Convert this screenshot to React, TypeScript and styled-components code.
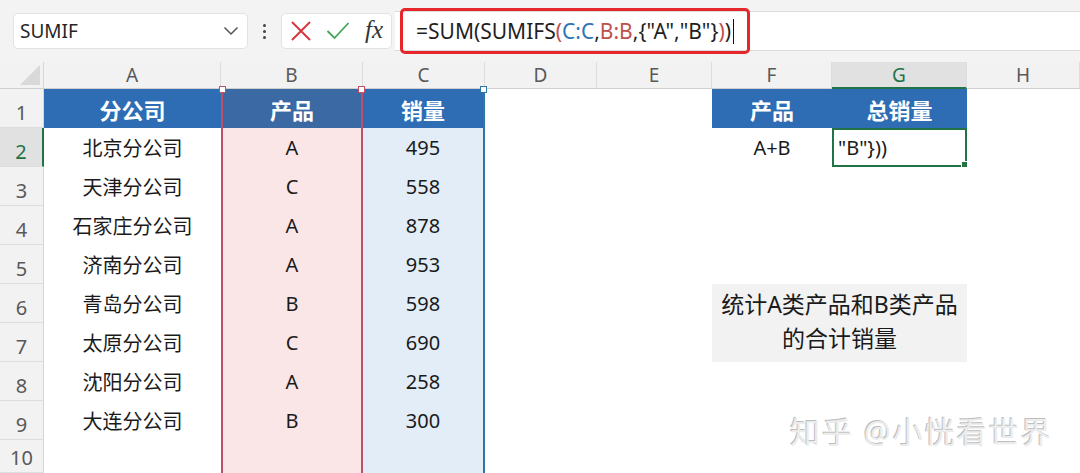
import React from 'react';
import styled, { createGlobalStyle, css } from 'styled-components';

const GlobalStyle = createGlobalStyle`
	html, body {
		margin: 0;
		padding: 0;
		background: #ffffff;
		overflow: hidden;
	}
	body {
		font-family: 'Noto Sans', 'Noto Sans CJK SC', sans-serif;
	}
`;

const COLS = '44px 177px 142px 122px 112px 115px 120px 135px 113px';

const Page = styled.div`
	position: relative;
	width: 1080px;
	height: 473px;
	overflow: hidden;
	background: #ffffff;
`;

const Toolbar = styled.div`
	height: 62px;
	display: flex;
	align-items: center;
	background: #f3f3f3;
	padding-left: 13px;
	box-sizing: border-box;
`;

const NameBox = styled.div`
	width: 235px;
	height: 36px;
	box-sizing: border-box;
	background: #ffffff;
	border: 1px solid #e2e2e2;
	border-radius: 5px;
	display: flex;
	align-items: center;
	justify-content: space-between;
	padding: 0 8px 0 6px;
	font-size: 19px;
	color: #262626;
`;

const Dots = styled.div`
	width: 33px;
	display: flex;
	flex-direction: column;
	align-items: center;
	gap: 3px;
	span {
		width: 3px;
		height: 3px;
		border-radius: 50%;
		background: #444;
	}
`;

const FxBox = styled.div`
	width: 111px;
	height: 36px;
	box-sizing: border-box;
	background: #ffffff;
	border: 1px solid #e2e2e2;
	border-radius: 5px;
	display: flex;
	align-items: center;
	justify-content: space-between;
	padding: 0 8px 0 8px;
`;

const Fx = styled.span`
	font-family: 'Liberation Serif', 'DejaVu Serif', serif;
	font-style: italic;
	font-size: 25px;
	color: #333;
	line-height: 1;
	margin-top: -4px;
`;

const FormulaArea = styled.div`
	flex: 1;
	margin-left: 3px;
	height: 40px;
	background: #ffffff;
	border-top: 1px solid #dcdcdc;
	border-bottom: 1px solid #dcdcdc;
	display: flex;
	align-items: center;
	padding-left: 5px;
	box-sizing: border-box;
`;

const Highlight = styled.div`
	width: 350px;
	height: 46px;
	flex-shrink: 0;
	box-sizing: border-box;
	border: 3px solid #e5262a;
	border-radius: 5px;
	display: flex;
	align-items: center;
	padding-left: 13px;
	font-size: 21px;
	color: #1f1f1f;
	white-space: nowrap;
`;

const Tok = styled.span<{ $c?: 'red' | 'blue' }>`
	color: ${(p) => (p.$c === 'red' ? '#c0504d' : p.$c === 'blue' ? '#2e75b6' : '#1f1f1f')};
`;

const Caret = styled.span`
	display: inline-block;
	width: 1px;
	height: 25px;
	background: #111;
	margin-left: 2px;
`;

const Sheet = styled.div`
	display: grid;
	grid-template-columns: ${COLS};
	grid-template-rows: 27px repeat(9, 39px) 33px;
`;

const Corner = styled.div`
	background: #f2f2f2;
	border-bottom: 1px solid #cfcfcf;
	border-right: 1px solid #d6d6d6;
	position: relative;
	&::after {
		content: '';
		position: absolute;
		right: 3px;
		bottom: 3px;
		width: 20px;
		height: 20px;
		background: #d9d9d9;
		clip-path: polygon(100% 0, 100% 100%, 0 100%);
	}
`;

const ColHead = styled.div<{ $active?: boolean }>`
	background: ${(p) => (p.$active ? '#e1e1e1' : '#f2f2f2')};
	color: ${(p) => (p.$active ? '#217346' : '#595959')};
	border-right: 1px solid #dddddd;
	border-bottom: ${(p) => (p.$active ? '2px solid #217346' : '1px solid #cfcfcf')};
	display: flex;
	align-items: center;
	justify-content: center;
	font-size: 19px;
	box-sizing: border-box;
`;

const RowHead = styled.div<{ $active?: boolean }>`
	background: ${(p) => (p.$active ? '#e1e1e1' : '#f2f2f2')};
	color: ${(p) => (p.$active ? '#217346' : '#595959')};
	border-bottom: 1px solid #dddddd;
	border-right: ${(p) => (p.$active ? '2px solid #217346' : '1px solid #d6d6d6')};
	display: flex;
	align-items: flex-end;
	justify-content: center;
	padding-bottom: 1px;
	font-size: 20px;
	box-sizing: border-box;
`;

type Tint = 'pink' | 'blue' | undefined;

const Cell = styled.div<{ $head?: boolean; $tint?: Tint; $left?: boolean; $selected?: boolean }>`
	position: relative;
	display: flex;
	align-items: center;
	justify-content: ${(p) => (p.$left ? 'flex-start' : 'center')};
	padding-left: ${(p) => (p.$left ? '6px' : '0')};
	box-sizing: border-box;
	font-size: 20px;
	color: #1a1a1a;
	background: #ffffff;
	white-space: nowrap;
	${(p) =>
		p.$tint === 'pink' &&
		css`
			background: #fbe6e7;
			border-left: 2px solid #c0506a;
			border-right: 2px solid #c0506a;
		`}
	${(p) =>
		p.$tint === 'blue' &&
		css`
			background: #e2edf8;
			border-right: 2px solid #2a78a8;
		`}
	${(p) =>
		p.$head &&
		css`
			background: ${p.$tint === 'pink' ? '#3b69a4' : '#2e6db4'};
			color: #ffffff;
			font-weight: 700;
			font-size: 22px;
		`}
	${(p) =>
		p.$selected &&
		css`
			border: 2px solid #217346;
			padding-left: 4px;
			&::after {
				content: '';
				position: absolute;
				right: -4px;
				bottom: -4px;
				width: 6px;
				height: 6px;
				background: #217346;
				border: 1px solid #fff;
			}
		`}
`;

const Handle = styled.span<{ $side: 'left' | 'right'; $color: string }>`
	position: absolute;
	top: -3px;
	${(p) => (p.$side === 'left' ? 'left: -4px;' : 'right: -4px;')}
	width: 5px;
	height: 5px;
	background: #fff;
	border: 1px solid ${(p) => p.$color};
	z-index: 2;
`;

const Note = styled.div`
	grid-column: 7 / 9;
	grid-row: 7 / 9;
	background: #f2f2f2;
	display: flex;
	align-items: center;
	justify-content: center;
	text-align: center;
	font-size: 23px;
	line-height: 34px;
	color: #1a1a1a;
	padding-bottom: 4px;
	box-sizing: border-box;
`;

const Watermark = styled.div`
	position: absolute;
	left: 790px;
	top: 408px;
	font-size: 30px;
	letter-spacing: 2px;
	color: #ececec;
	text-shadow: -1px -1px 0 #bdbdbd, 1px 1px 0 #ffffff;
	pointer-events: none;
	white-space: nowrap;
`;

const letters = ['A', 'B', 'C', 'D', 'E', 'F', 'G', 'H'];

const data: [string, string, string][] = [
	['北京分公司', 'A', '495'],
	['天津分公司', 'C', '558'],
	['石家庄分公司', 'A', '878'],
	['济南分公司', 'A', '953'],
	['青岛分公司', 'B', '598'],
	['太原分公司', 'C', '690'],
	['沈阳分公司', 'A', '258'],
	['大连分公司', 'B', '300'],
];

function Chevron() {
	return (
		<svg width="16" height="10" viewBox="0 0 16 10">
			<path d="M1.5 1.5 L8 8 L14.5 1.5" fill="none" stroke="#555" strokeWidth="1.5" />
		</svg>
	);
}

function Cross() {
	return (
		<svg width="22" height="22" viewBox="0 0 22 22">
			<path d="M2 2 L20 20 M20 2 L2 20" stroke="#d9363e" strokeWidth="2" />
		</svg>
	);
}

function Check() {
	return (
		<svg width="24" height="20" viewBox="0 0 24 20">
			<path d="M1.5 10 L8.5 17 L22.5 2" fill="none" stroke="#45a45a" strokeWidth="1.8" />
		</svg>
	);
}

function FormulaBar() {
	return (
		<Toolbar>
			<NameBox>
				SUMIF
				<Chevron />
			</NameBox>
			<Dots>
				<span />
				<span />
				<span />
			</Dots>
			<FxBox>
				<Cross />
				<Check />
				<Fx>fx</Fx>
			</FxBox>
			<FormulaArea>
				<Highlight>
					<Tok>=SUM(SUMIFS</Tok>
					<Tok $c="red">(</Tok>
					<Tok $c="blue">C:C</Tok>
					<Tok>,</Tok>
					<Tok $c="red">B:B</Tok>
					<Tok>,{'{'}"A","B"{'}'}</Tok>
					<Tok $c="red">)</Tok>
					<Tok>)</Tok>
					<Caret />
				</Highlight>
			</FormulaArea>
		</Toolbar>
	);
}

function BodyRow({ n, cells }: { n: number; cells: React.ReactNode }) {
	return (
		<>
			<RowHead $active={n === 2}>{n}</RowHead>
			{cells}
		</>
	);
}

export default function App() {
	return (
		<Page>
			<GlobalStyle />
			<FormulaBar />
			<Sheet>
				<Corner />
				{letters.map((l) => (
					<ColHead key={l} $active={l === 'G'}>
						{l}
					</ColHead>
				))}

				<BodyRow
					n={1}
					cells={
						<>
							<Cell $head>分公司</Cell>
							<Cell $head $tint="pink">
								<Handle $side="left" $color="#c0506a" />
								<Handle $side="right" $color="#c0506a" />
								产品
							</Cell>
							<Cell $head $tint="blue">
								<Handle $side="right" $color="#2a78a8" />
								销量
							</Cell>
							<Cell />
							<Cell />
							<Cell $head>产品</Cell>
							<Cell $head>总销量</Cell>
							<Cell />
						</>
					}
				/>

				{data.map(([branch, prod, qty], i) => {
					const n = i + 2;
					const noteRow = n === 6 || n === 7;
					return (
						<BodyRow
							key={n}
							n={n}
							cells={
								<>
									<Cell>{branch}</Cell>
									<Cell $tint="pink">{prod}</Cell>
									<Cell $tint="blue">{qty}</Cell>
									<Cell />
									<Cell />
									{n === 2 && (
										<>
											<Cell>A+B</Cell>
											<Cell $selected $left>
												"B"{'}'}))
											</Cell>
										</>
									)}
									{n !== 2 && !noteRow && (
										<>
											<Cell />
											<Cell />
										</>
									)}
									<Cell />
								</>
							}
						/>
					);
				})}

				<BodyRow
					n={10}
					cells={
						<>
							<Cell />
							<Cell $tint="pink" />
							<Cell $tint="blue" />
							<Cell />
							<Cell />
							<Cell />
							<Cell />
							<Cell />
						</>
					}
				/>

				<Note>
					统计A类产品和B类产品
					<br />
					的合计销量
				</Note>
			</Sheet>
			<Watermark>知乎 @小恍看世界</Watermark>
		</Page>
	);
}
